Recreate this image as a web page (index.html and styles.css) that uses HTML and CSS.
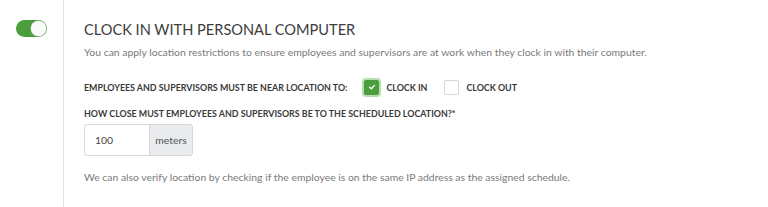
FILE: index.html
```html
<!DOCTYPE html>
<html lang="en">
<head>
    <meta charset="UTF-8">
    <title>Clock In Settings</title>
    <link rel="stylesheet" href="styles.css">
</head>
<body>
    <div class="setting">
        <div class="setting-toggle">
            <span class="switch on"><span class="knob"></span></span>
        </div>
        <div class="setting-body">
            <h2 class="title">CLOCK IN WITH PERSONAL COMPUTER</h2>
            <p class="desc">You can apply location restrictions to ensure employees and supervisors are at work when they clock in with their computer.</p>
            <div class="check-row">
                <span class="label">EMPLOYEES AND SUPERVISORS MUST BE NEAR LOCATION TO:</span>
                <label class="check"><span class="box checked"><svg viewBox="0 0 10 10" width="8" height="8"><path d="M2 5.2 L4.2 7.2 L8 3" fill="none" stroke="#fff" stroke-width="1.6" stroke-linecap="round" stroke-linejoin="round"/></svg></span>CLOCK IN</label>
                <label class="check"><span class="box"></span>CLOCK OUT</label>
            </div>
            <div class="label q">HOW CLOSE MUST EMPLOYEES AND SUPERVISORS BE TO THE SCHEDULED LOCATION?*</div>
            <div class="input-group">
                <span class="field">100</span>
                <span class="addon">meters</span>
            </div>
            <p class="desc note">We can also verify location by checking if the employee is on the same IP address as the assigned schedule.</p>
        </div>
    </div>
</body>
</html>
```

FILE: styles.css
```css
body { margin: 0; background: #fff; font-family: Lato, "Open Sans", sans-serif; color: #3a3a3a; }
.setting { display: flex; height: 207px; }
.setting-toggle { width: 63px; padding-top: 20px; box-sizing: border-box; padding-left: 16px; }
.switch { display: block; width: 31px; height: 17px; border-radius: 9px; background: #4a9f3c; position: relative; }
.switch .knob { position: absolute; right: 1px; top: 1px; width: 15px; height: 15px; border-radius: 50%; background: #fafafa; box-shadow: 0 0 0 0.5px #cfcfcf; }
.setting-body { flex: 1; border-left: 1px solid #e2e2e2; padding-left: 20px; }
.title { margin: 21px 0 0; font-size: 14.6px; font-weight: 400; color: #3d3d3d; line-height: 18px; }
.desc { margin: 6px 0 0; font-size: 10.4px; color: #7a7a7a; line-height: 14px; }
.check-row { display: flex; align-items: center; margin-top: 19px; height: 18px; }
.label { font-size: 8.9px; font-weight: 700; color: #3a3a3a; }
.check { display: flex; align-items: center; font-size: 8.9px; font-weight: 700; color: #3a3a3a; margin-left: 17px; }
.check + .check { margin-left: 17px; }
.box { width: 13px; height: 13px; border: 1px solid #d6d6d6; border-radius: 2px; margin-right: 7px; display: flex; align-items: center; justify-content: center; background: #fff; }
.box.checked { background: #4a9f3c; border-color: #4a9f3c; box-shadow: 0 0 0 2px #b9ddb2; }
.q { margin-top: 12px; }
.input-group { display: flex; margin-top: 5px; width: 109px; height: 32px; border: 1px solid #d9d9d9; border-radius: 3px; box-sizing: border-box; overflow: hidden; }
.field { width: 54px; display: flex; align-items: center; padding-left: 10px; font-size: 10.4px; color: #444; }
.addon { flex: 1; background: #e9ebee; border-left: 1px solid #d9d9d9; display: flex; align-items: center; justify-content: center; font-size: 10.4px; color: #555; }
.note { margin-top: 14px; }
```
